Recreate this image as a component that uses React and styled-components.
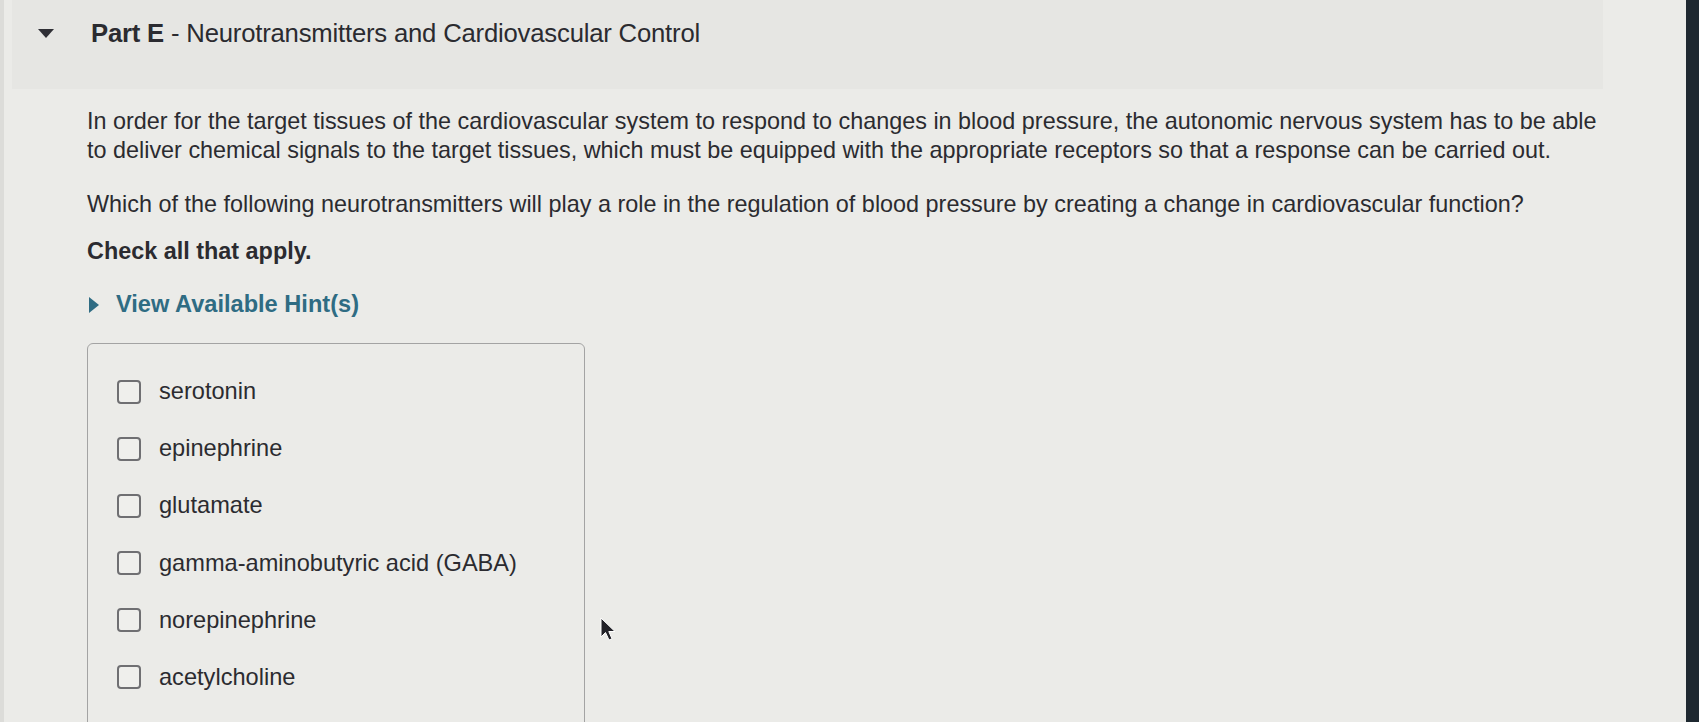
import React from 'react';
import styled, { createGlobalStyle } from 'styled-components';

const GlobalStyle = createGlobalStyle`
  html, body {
    margin: 0;
    padding: 0;
    background: #ebebe8;
  }
  body {
    font-family: "Liberation Sans", Arial, sans-serif;
    color: #2b2b30;
  }
`;

const Page = styled.div`
  display: flex;
  width: 100%;
  height: 722px;
  overflow: hidden;
  background: #ebebe8;
`;

const Main = styled.div`
  flex: 1;
  position: relative;
  border-left: 4px solid #dcdcd9; /* darker photo edge on the left */
`;

const RightEdge = styled.div`
  width: 13px;
  background: #1e2830;
`;

const Header = styled.div`
  margin-left: 8px;
  width: 1591px;
  height: 89px;
  background: #e6e6e3;
  display: flex;
  align-items: flex-start;
  padding-top: 19px;
  box-sizing: border-box;
`;

const CaretDown = styled.span`
  width: 0;
  height: 0;
  margin: 10px 0 0 26px;
  border-left: 8px solid transparent;
  border-right: 8px solid transparent;
  border-top: 9px solid #2f2f35;
`;

const Title = styled.h2`
  margin: 0 0 0 37px;
  font-size: 25.7px;
  line-height: 29px;
  font-weight: normal;
  letter-spacing: -0.2px;

  b {
    font-weight: bold;
  }
`;

const Content = styled.div`
  padding-left: 83px;
`;

const Para = styled.p`
  margin: ${(p) => p.$top || 0}px 0 0 0;
  font-size: 23.4px;
  line-height: 29.3px;
  font-weight: ${(p) => (p.$bold ? 'bold' : 'normal')};
  white-space: nowrap;
`;

const HintToggle = styled.div`
  margin-top: 24px;
  display: flex;
  align-items: center;
  height: 29px;
  color: #2f6c83;
  font-size: 23.6px;
  font-weight: bold;
`;

const CaretRight = styled.span`
  width: 0;
  height: 0;
  margin: 0 17px 0 2px;
  border-top: 8px solid transparent;
  border-bottom: 8px solid transparent;
  border-left: 10px solid #2f6c83;
`;

const ChoiceBox = styled.div`
  margin-top: 24px;
  width: 498px;
  height: 420px;
  box-sizing: border-box;
  border: 1px solid #a3a3a3;
  border-radius: 6px;
  padding: 19px 0 0 29px;
`;

const Choice = styled.label`
  display: flex;
  align-items: center;
  height: 57.1px;
  font-size: 23.6px;
  gap: 18px;
`;

const Box = styled.span`
  width: 24px;
  height: 24px;
  box-sizing: border-box;
  border: 2px solid #6f6f72;
  border-radius: 4px;
  background: #efefec;
  flex-shrink: 0;
`;

const Cursor = styled.svg`
  position: absolute;
  left: 596px;
  top: 617px;
`;

const choices = [
  'serotonin',
  'epinephrine',
  'glutamate',
  'gamma-aminobutyric acid (GABA)',
  'norepinephrine',
  'acetylcholine',
];

export default function App() {
  return (
    <>
      <GlobalStyle />
      <Page>
        <Main>
          <Header>
            <CaretDown />
            <Title>
              <b>Part E</b> - Neurotransmitters and Cardiovascular Control
            </Title>
          </Header>
          <Content>
            <Para $top={18}>
              In order for the target tissues of the cardiovascular system to respond to changes in blood pressure, the autonomic nervous system has to be able
              <br />
              to deliver chemical signals to the target tissues, which must be equipped with the appropriate receptors so that a response can be carried out.
            </Para>
            <Para $top={24}>
              Which of the following neurotransmitters will play a role in the regulation of blood pressure by creating a change in cardiovascular function?
            </Para>
            <Para $top={18} $bold>
              Check all that apply.
            </Para>
            <HintToggle>
              <CaretRight />
              View Available Hint(s)
            </HintToggle>
            <ChoiceBox>
              {choices.map((c) => (
                <Choice key={c}>
                  <Box />
                  {c}
                </Choice>
              ))}
            </ChoiceBox>
          </Content>
          <Cursor width="17" height="26" viewBox="0 0 17 26">
            <path d="M1 1 L1 20 L5.5 15.5 L9 23 L12 21.8 L8.8 14.5 L15 14.5 Z" fill="#222228" stroke="#ffffff" strokeWidth="1" />
          </Cursor>
        </Main>
        <RightEdge />
      </Page>
    </>
  );
}
